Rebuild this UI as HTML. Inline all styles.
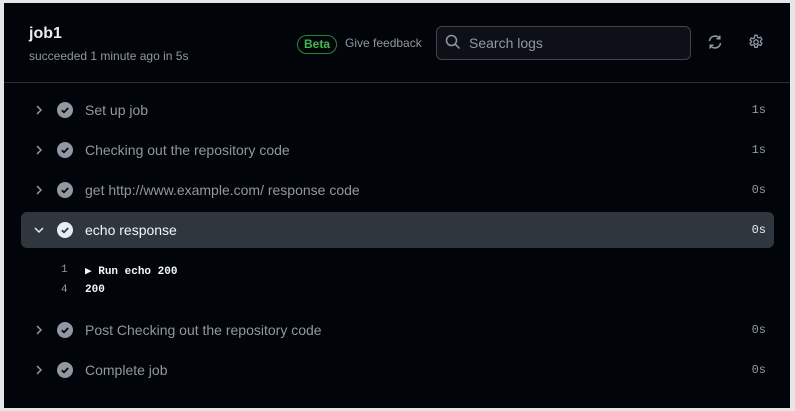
<!DOCTYPE html><html><head><style>
body{margin:0;width:795px;height:411px;background:#e6e6e6;overflow:hidden;font-family:"Liberation Sans",sans-serif}
.card{position:absolute;left:4px;top:3px;width:786px;height:405px;background:#010409;}
.t{position:absolute;color:#e6edf3}
.row{position:absolute;left:17px;width:753px;height:36px;border-radius:6px}
.row .chev{position:absolute;left:12px;top:12px}
.row .ck{position:absolute;left:36px;top:10px}
.row .lbl{position:absolute;left:64px;top:10px;font-size:14px;color:#9198a1}
.row .tm{position:absolute;right:8px;top:11px;font-size:12px;font-family:"Liberation Mono",monospace;color:#9198a1}
.mono{font-family:"Liberation Mono",monospace;font-size:11px;font-weight:bold}
</style></head><body><div class="card">
<div class="t" style="left:25px;top:22px;font-size:16px;font-weight:bold">job1</div>
<div class="t" style="left:25px;top:46px;font-size:12px;color:#9198a1">succeeded 1 minute ago in 5s</div>
<div style="position:absolute;left:293px;top:32px;width:38px;height:17px;border:1px solid #238636;border-radius:10px;color:#3fb950;font-size:12px;font-weight:bold;text-align:center;line-height:17px">Beta</div>
<div class="t" style="left:341px;top:33px;font-size:12px;color:#9198a1">Give feedback</div>
<div style="position:absolute;left:432px;top:23px;width:253px;height:32px;border:1px solid #3d444d;border-radius:6px;background:#0d1117"></div>
<svg style="position:absolute;left:441px;top:31px" width="16" height="16" viewBox="0 0 16 16" fill="none" stroke="#9198a1" stroke-width="1.5"><circle cx="6.5" cy="6.5" r="5"/><path d="M10.2 10.2L14.5 14.5"/></svg>
<div class="t" style="left:465px;top:32px;font-size:14px;color:#9198a1">Search logs</div>
<svg style="position:absolute;left:703px;top:31px" width="16" height="16" viewBox="0 0 16 16" fill="none" stroke="#9198a1" stroke-width="1.5"><path d="M2.5 7A5.5 5.5 0 0 1 12.5 4.5M13.5 9A5.5 5.5 0 0 1 3.5 11.5"/><path d="M12.8 1.5v3.3H9.5M3.2 14.5v-3.3h3.3"/></svg>
<svg style="position:absolute;left:744px;top:31px" width="16" height="16" viewBox="0 0 16 16" fill="none" stroke="#9198a1" stroke-width="1.3"><circle cx="8" cy="8" r="2.2"/><path d="M6.8 1.3h2.4l.4 1.9 1.3.7 1.8-.7 1.2 2.1-1.4 1.3v1.4l1.4 1.3-1.2 2.1-1.8-.7-1.3.7-.4 1.9H6.8l-.4-1.9-1.3-.7-1.8.7-1.2-2.1 1.4-1.3V7.3L2.1 6l1.2-2.1 1.8.7 1.3-.7z"/></svg>
<div style="position:absolute;left:0;top:79px;width:786px;height:1px;background:#2a2f36"></div>

<div class="row" style="top:89px"><svg class="chev" width="12" height="12" viewBox="0 0 12 12"><path d="M4 2l4 4-4 4" stroke="#9198a1" stroke-width="1.5" fill="none"/></svg><svg class="ck" width="16" height="16" viewBox="0 0 16 16"><circle cx="8" cy="8" r="8" fill="#9198a1"/><path d="M4.8 8.2l2.2 2.1 4.2-4.3" stroke="#010409" stroke-width="1.7" fill="none"/></svg><div class="lbl">Set up job</div><div class="tm">1s</div></div>
<div class="row" style="top:129px"><svg class="chev" width="12" height="12" viewBox="0 0 12 12"><path d="M4 2l4 4-4 4" stroke="#9198a1" stroke-width="1.5" fill="none"/></svg><svg class="ck" width="16" height="16" viewBox="0 0 16 16"><circle cx="8" cy="8" r="8" fill="#9198a1"/><path d="M4.8 8.2l2.2 2.1 4.2-4.3" stroke="#010409" stroke-width="1.7" fill="none"/></svg><div class="lbl">Checking out the repository code</div><div class="tm">1s</div></div>
<div class="row" style="top:169px"><svg class="chev" width="12" height="12" viewBox="0 0 12 12"><path d="M4 2l4 4-4 4" stroke="#9198a1" stroke-width="1.5" fill="none"/></svg><svg class="ck" width="16" height="16" viewBox="0 0 16 16"><circle cx="8" cy="8" r="8" fill="#9198a1"/><path d="M4.8 8.2l2.2 2.1 4.2-4.3" stroke="#010409" stroke-width="1.7" fill="none"/></svg><div class="lbl">get http://www.example.com/ response code</div><div class="tm">0s</div></div>
<div class="row" style="top:209px;background:#30363d"><svg class="chev" width="12" height="12" viewBox="0 0 12 12"><path d="M2 4l4 4 4-4" stroke="#e6edf3" stroke-width="1.5" fill="none"/></svg><svg class="ck" width="16" height="16" viewBox="0 0 16 16"><circle cx="8" cy="8" r="8" fill="#e6edf3"/><path d="M4.8 8.2l2.2 2.1 4.2-4.3" stroke="#30363d" stroke-width="1.7" fill="none"/></svg><div class="lbl" style="color:#f0f6fc">echo response</div><div class="tm" style="color:#e6edf3">0s</div></div>
<div class="t mono" style="left:57px;top:261px;color:#9198a1;font-weight:normal">1</div>
<div class="t mono" style="left:81px;top:261px;color:#f0f6fc">▶ Run echo 200</div>
<div class="t mono" style="left:57px;top:281px;color:#9198a1;font-weight:normal">4</div>
<div class="t mono" style="left:81px;top:281px;color:#f0f6fc">200</div>
<div class="row" style="top:309px"><svg class="chev" width="12" height="12" viewBox="0 0 12 12"><path d="M4 2l4 4-4 4" stroke="#9198a1" stroke-width="1.5" fill="none"/></svg><svg class="ck" width="16" height="16" viewBox="0 0 16 16"><circle cx="8" cy="8" r="8" fill="#9198a1"/><path d="M4.8 8.2l2.2 2.1 4.2-4.3" stroke="#010409" stroke-width="1.7" fill="none"/></svg><div class="lbl">Post Checking out the repository code</div><div class="tm">0s</div></div>
<div class="row" style="top:349px"><svg class="chev" width="12" height="12" viewBox="0 0 12 12"><path d="M4 2l4 4-4 4" stroke="#9198a1" stroke-width="1.5" fill="none"/></svg><svg class="ck" width="16" height="16" viewBox="0 0 16 16"><circle cx="8" cy="8" r="8" fill="#9198a1"/><path d="M4.8 8.2l2.2 2.1 4.2-4.3" stroke="#010409" stroke-width="1.7" fill="none"/></svg><div class="lbl">Complete job</div><div class="tm">0s</div></div>
</div></body></html>
